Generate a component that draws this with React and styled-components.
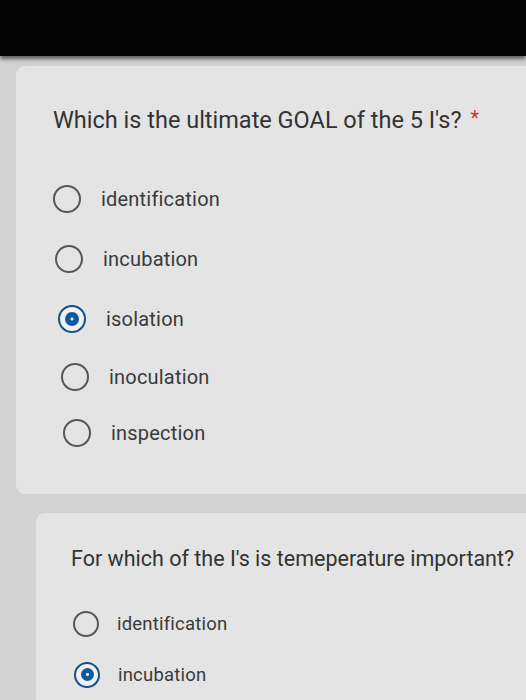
import React from 'react';
import styled, { createGlobalStyle } from 'styled-components';

const Global = createGlobalStyle`
  html, body {
    margin: 0;
    padding: 0;
    background: #d3d3d3;
    font-family: Roboto, "Liberation Sans", sans-serif;
  }
`;

const Screen = styled.div`
  width: 526px;
  height: 700px;
  overflow: hidden;
  background: #d2d2d2;
`;

const TopBar = styled.div`
  height: 56px;
  background: #050505;
  box-shadow: 0 3px 4px rgba(0, 0, 0, 0.55);
`;

const Page = styled.div`
  padding-top: 10px;
  display: flex;
  flex-direction: column;
  gap: 19px;
`;

const Card = styled.div`
  margin-left: ${p => p.left}px;
  background: #e4e4e4;
  border-radius: 9px 0 0 9px;
  padding: ${p => p.pad};
`;

const Question = styled.div`
  font-family: Roboto, "Open Sans", sans-serif;
  font-size: ${p => p.size}px;
  line-height: 30px;
  color: #333333;
  white-space: nowrap;
`;

const Star = styled.span`
  color: #d9302a;
  font-size: 0.85em;
  margin-left: 9px;
  vertical-align: 3px;
`;

const Options = styled.div`
  display: flex;
  flex-direction: column;
  margin-top: ${p => p.top}px;
`;

const Row = styled.label`
  display: flex;
  align-items: center;
  height: ${p => p.h}px;
  padding-left: ${p => p.shift}px;
`;

const Radio = styled.span`
  box-sizing: border-box;
  width: ${p => p.size}px;
  height: ${p => p.size}px;
  border-radius: 50%;
  border: 2px solid ${p => (p.checked ? '#174f86' : '#575757')};
  background: ${p => (p.checked ? '#eef0f2' : 'transparent')};
  display: flex;
  align-items: center;
  justify-content: center;
  flex-shrink: 0;
  &::after {
    content: '';
    display: ${p => (p.checked ? 'block' : 'none')};
    width: ${p => p.size * 0.5}px;
    height: ${p => p.size * 0.5}px;
    border-radius: 50%;
    background: radial-gradient(circle, #e9eef5 0 1.2px, #0f5a9f 1.8px);
  }
`;

const OptionText = styled.span`
  margin-left: ${p => p.gap}px;
  font-size: ${p => p.size}px;
  color: #3a3a3a;
  letter-spacing: 0.2px;
`;

const first = [
  { label: 'identification', shift: 0, h: 61 },
  { label: 'incubation', shift: 2, h: 60 },
  { label: 'isolation', shift: 5, h: 59, checked: true },
  { label: 'inoculation', shift: 8, h: 57 },
  { label: 'inspection', shift: 10, h: 56 },
];

const second = [
  { label: 'identification', shift: 2 },
  { label: 'incubation', shift: 3, checked: true },
];

export default function App() {
  return (
    <Screen>
      <Global />
      <TopBar />
      <Page>
        <Card left={16} pad="37px 0 33px 37px">
          <Question size={23.5}>
            Which is the ultimate GOAL of the 5 I's?<Star>*</Star>
          </Question>
          <Options top={33}>
            {first.map(o => (
              <Row key={o.label} h={o.h} shift={o.shift}>
                <Radio size={28} checked={o.checked} />
                <OptionText size={20} gap={20}>{o.label}</OptionText>
              </Row>
            ))}
          </Options>
        </Card>
        <Card left={36} pad="31px 0 40px 35px">
          <Question size={21.5}>
            For which of the I's is temeperature important?
          </Question>
          <Options top={24}>
            {second.map(o => (
              <Row key={o.label} h={51} shift={o.shift}>
                <Radio size={26} checked={o.checked} />
                <OptionText size={18.5} gap={18}>{o.label}</OptionText>
              </Row>
            ))}
          </Options>
        </Card>
      </Page>
    </Screen>
  );
}
